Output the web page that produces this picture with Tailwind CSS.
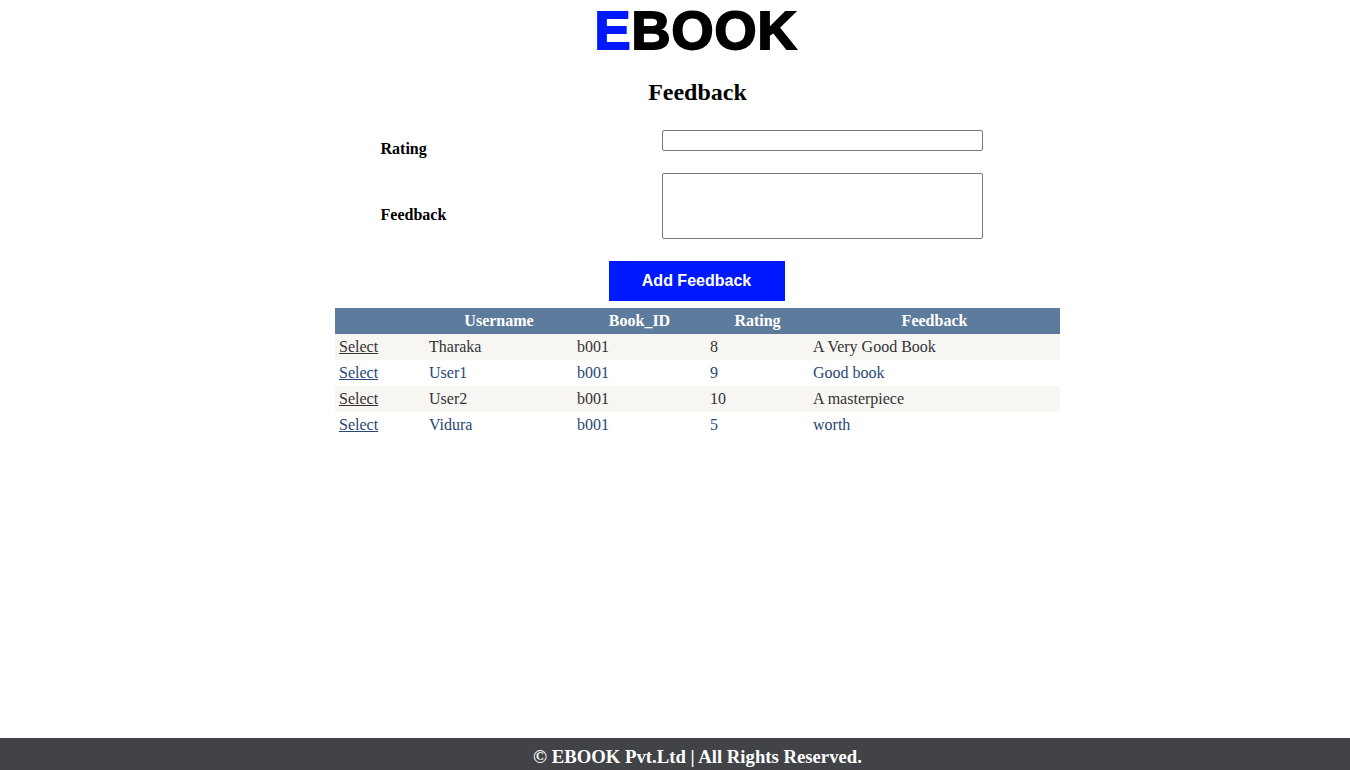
<!DOCTYPE html>
<html lang="en">
  <head>
    <meta charset="UTF-8" />
    <meta name="viewport" content="width=device-width, initial-scale=1.0" />
    <title>Feedback</title>
    <script src="https://cdn.jsdelivr.net/npm/@tailwindcss/browser@4"></script>
  </head>
  <body class="bg-white text-black font-['Liberation_Serif',serif]">
    <div class="h-[770px] overflow-hidden">
      <div class="w-[1395px] h-full flex flex-col items-center">
        <!-- logo -->
        <div class="h-[60px] pr-[3px] flex items-center justify-center font-['Liberation_Sans',sans-serif] font-bold text-[54px] tracking-[1px] leading-none [-webkit-text-stroke:2px_currentColor]">
          <span class="text-[#0019ff]">E</span><span>BOOK</span>
        </div>

        <h2 class="mt-[19px] h-[27px] text-2xl leading-[27px] font-bold">Feedback</h2>

        <!-- form -->
        <div class="w-[725px] mt-[24px]">
          <div class="flex items-start h-[43px]">
            <label class="w-[327px] pl-[45.5px] pt-[10px] font-bold leading-[18px]">Rating</label>
            <input type="text" class="w-[321px] h-[21px] bg-white border border-[#767676] rounded-[2px]" />
          </div>
          <div class="flex items-start h-[66px]">
            <label class="w-[327px] pl-[45.5px] pt-[33px] font-bold leading-[18px]">Feedback</label>
            <textarea class="w-[321px] h-[66px] bg-white border border-[#767676] rounded-[2px] resize-none"></textarea>
          </div>
          <div class="flex justify-center mt-[22px] pr-[2px]">
            <button class="w-[176px] h-[40px] bg-[#0019ff] text-white font-['Liberation_Sans',sans-serif] font-bold text-base">Add Feedback</button>
          </div>
        </div>

        <!-- feedback table -->
        <table class="mt-[7px] w-[725px] table-fixed border-collapse text-base">
          <thead class="bg-[#5d7b9d] text-white">
            <tr class="h-[26px]">
              <th class="w-[90px] px-[4px] py-0"></th>
              <th class="w-[148px] px-[4px] py-0">Username</th>
              <th class="w-[133px] px-[4px] py-0">Book_ID</th>
              <th class="w-[103px] px-[4px] py-0">Rating</th>
              <th class="w-[251px] px-[4px] py-0">Feedback</th>
            </tr>
          </thead>
          <tbody>
            <tr class="h-[26px] bg-[#f7f6f3] text-[#333333]">
              <td class="px-[4px]"><a href="#" class="underline">Select</a></td>
              <td class="px-[4px]">Tharaka</td>
              <td class="px-[4px]">b001</td>
              <td class="px-[4px]">8</td>
              <td class="px-[4px]">A Very Good Book</td>
            </tr>
            <tr class="h-[26px] bg-white text-[#284775]">
              <td class="px-[4px]"><a href="#" class="underline">Select</a></td>
              <td class="px-[4px]">User1</td>
              <td class="px-[4px]">b001</td>
              <td class="px-[4px]">9</td>
              <td class="px-[4px]">Good book</td>
            </tr>
            <tr class="h-[26px] bg-[#f7f6f3] text-[#333333]">
              <td class="px-[4px]"><a href="#" class="underline">Select</a></td>
              <td class="px-[4px]">User2</td>
              <td class="px-[4px]">b001</td>
              <td class="px-[4px]">10</td>
              <td class="px-[4px]">A masterpiece</td>
            </tr>
            <tr class="h-[26px] bg-white text-[#284775]">
              <td class="px-[4px]"><a href="#" class="underline">Select</a></td>
              <td class="px-[4px]">Vidura</td>
              <td class="px-[4px]">b001</td>
              <td class="px-[4px]">5</td>
              <td class="px-[4px]">worth</td>
            </tr>
          </tbody>
        </table>

        <!-- footer -->
        <footer class="mt-auto w-full h-[32px] bg-[#414347] text-white text-center font-bold text-[18.72px] leading-[38px]">
          © EBOOK Pvt.Ltd | All Rights Reserved.
        </footer>
      </div>
    </div>
  </body>
</html>
